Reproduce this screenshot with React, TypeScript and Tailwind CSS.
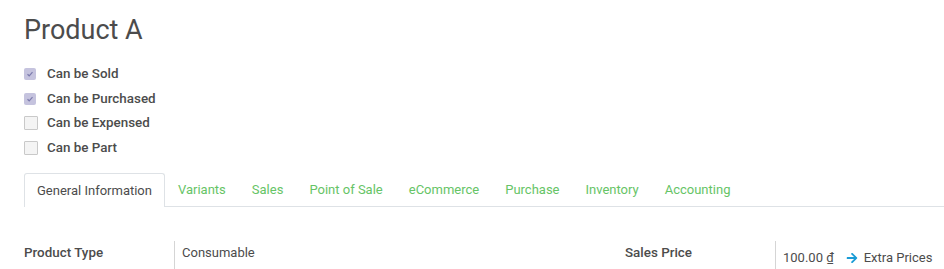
import React from "react";

function Check({ checked }: { checked: boolean }) {
  if (checked) {
    return (
      <span className="flex h-[12px] w-[12px] items-center justify-center rounded-[2px] bg-[#c5c3de]">
        <svg width="8" height="8" viewBox="0 0 8 8">
          <path d="M1.5 4.2 L3.2 5.8 L6.5 2.2" fill="none" stroke="#7c7bad" strokeWidth="1.2" />
        </svg>
      </span>
    );
  }
  return <span className="block h-[14px] w-[14px] rounded-[1px] border border-[#c9c9c9] bg-[#f4f4f4]" />;
}

const checks = [
  { label: "Can be Sold", checked: true },
  { label: "Can be Purchased", checked: true },
  { label: "Can be Expensed", checked: false },
  { label: "Can be Part", checked: false },
];

const tabs = ["Variants", "Sales", "Point of Sale", "eCommerce", "Purchase", "Inventory", "Accounting"];

export default function App() {
  return (
    <div className="h-[269px] w-[944px] overflow-hidden bg-white pl-6 font-['Roboto',sans-serif] text-[13px] text-[#4c4c4c]">
      <h1 className="pt-[13px] text-[27px] leading-[34px] font-normal text-[#4c4c4c]">Product A</h1>
      <div className="mt-[15px] flex flex-col">
        {checks.map((c) => (
          <div key={c.label} className="flex h-[24.6px] items-center">
            <div className="flex w-[23px] justify-start">
              <Check checked={c.checked} />
            </div>
            <span className="text-[13.4px] font-medium">{c.label}</span>
          </div>
        ))}
      </div>
      <div className="mt-[13px] flex h-[34px] border-b border-[#dee2e6]">
        <div className="-mb-px flex items-center rounded-t-[3px] border border-b-0 border-[#dee2e6] bg-white px-[12px] text-[#4c4c4c]">
          General Information
        </div>
        {tabs.map((t) => (
          <div key={t} className="flex items-center px-[13px] text-[#66c466]">
            {t}
          </div>
        ))}
      </div>
      <div className="mt-[34px] flex">
        <div className="flex w-[601px]">
          <div className="w-[150px] pt-[2px] text-[13.4px] font-medium">Product Type</div>
          <div className="h-[40px] border-l border-[#d5d5d5] pl-[7px] pt-[2px]">Consumable</div>
        </div>
        <div className="flex">
          <div className="w-[150px] pt-[2px] text-[13.4px] font-medium">Sales Price</div>
          <div className="flex h-[40px] items-start border-l border-[#d5d5d5] pl-[7px] pt-[7px]">
            <span>
              100.00 <span className="underline">₫</span>
            </span>
            <span className="ml-[12px] flex items-center gap-[6px]">
              <svg width="12" height="12" viewBox="0 0 448 512">
                <path
                  fill="#1a9cd6"
                  d="M190.5 66.9l22.2-22.2c9.4-9.4 24.6-9.4 33.9 0L441 239c9.4 9.4 9.4 24.6 0 33.9L246.6 467.3c-9.4 9.4-24.6 9.4-33.9 0l-22.2-22.2c-9.5-9.5-9.3-25 .4-34.3L311.4 296H24c-13.3 0-24-10.7-24-24v-32c0-13.3 10.7-24 24-24h287.4L190.9 101.2c-9.8-9.3-10-24.8-.4-34.3z"
                />
              </svg>
              Extra Prices
            </span>
          </div>
        </div>
      </div>
    </div>
  );
}
